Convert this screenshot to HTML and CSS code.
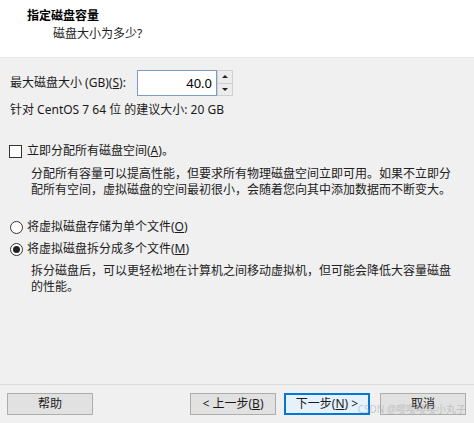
FILE: index.html
```html
<!DOCTYPE html>
<html lang="zh">
<head>
<meta charset="utf-8">
<title>指定磁盘容量</title>
<link rel="stylesheet" href="styles.css">
</head>
<body>
<div class="dialog">
  <header class="header">
    <div class="title">指定磁盘容量</div>
    <div class="subtitle">磁盘大小为多少?</div>
  </header>
  <main class="main">
    <div class="size-row">
      <span class="label">最大磁盘大小 (GB)(<u>S</u>):</span>
      <div class="spin">
        <div class="spin-input">40.0</div>
        <div class="spin-btns">
          <div class="spin-btn"><span class="tri-up"></span></div>
          <div class="spin-btn"><span class="tri-down"></span></div>
        </div>
      </div>
    </div>
    <div class="hint">针对 CentOS 7 64 位 的建议大小: 20 GB</div>
    <div class="opt opt-check">
      <span class="checkbox"></span>
      <span>立即分配所有磁盘空间(<u>A</u>)。</span>
    </div>
    <div class="desc desc-1">分配所有容量可以提高性能，但要求所有物理磁盘空间立即可用。如果不立即分<br>配所有空间，虚拟磁盘的空间最初很小，会随着您向其中添加数据而不断变大。</div>
    <div class="opt opt-r1">
      <span class="radio"></span>
      <span>将虚拟磁盘存储为单个文件(<u>O</u>)</span>
    </div>
    <div class="opt opt-r2">
      <span class="radio checked"><span class="dot"></span></span>
      <span>将虚拟磁盘拆分成多个文件(<u>M</u>)</span>
    </div>
    <div class="desc desc-2">拆分磁盘后，可以更轻松地在计算机之间移动虚拟机，但可能会降低大容量磁盘<br>的性能。</div>
  </main>
  <footer class="footer">
    <button class="btn">帮助</button>
    <div class="spacer"></div>
    <button class="btn">&lt; 上一步(<u>B</u>)</button>
    <button class="btn focus">下一步(<u>N</u>) &gt;</button>
    <button class="btn cancel">取消</button>
    <div class="watermark">CSDN @嘤嘤嘤嘤小丸子</div>
  </footer>
</div>
</body>
</html>
```

FILE: styles.css
```css
* { box-sizing: border-box; }
html, body { margin: 0; padding: 0; }
body {
  width: 474px;
  height: 423px;
  overflow: hidden;
  background: #f0f0f0;
  font-family: "Noto Sans", "Noto Sans CJK SC", sans-serif;
  font-size: 12px;
  color: #1a1a1a;
}
.dialog {
  display: flex;
  flex-direction: column;
  height: 423px;
}
.header {
  height: 58px;
  background: #fff;
  border-bottom: 1px solid #e6e6e6;
  padding-top: 8px;
}
.title {
  font-weight: bold;
  line-height: 16px;
  padding-left: 27px;
  color: #000;
}
.subtitle {
  line-height: 16px;
  padding-left: 53px;
  margin-top: 2px;
  color: #222;
}
.main {
  flex: 1;
  padding-left: 10px;
}
u { text-decoration: underline; text-underline-offset: 1px; }
.size-row {
  display: flex;
  align-items: center;
  height: 26px;
  margin-top: 12px;
}
.label { width: 127px; line-height: 16px; }
.spin {
  display: flex;
  height: 26px;
}
.spin-input {
  width: 80px;
  height: 26px;
  background: #fff;
  border: 1px solid #7a9cc6;
  text-align: right;
  padding-right: 4px;
  font-size: 13px;
  line-height: 24px;
  color: #000;
}
.spin-btns {
  display: flex;
  flex-direction: column;
  width: 16px;
  height: 26px;
}
.spin-btn {
  flex: 1;
  display: flex;
  align-items: center;
  justify-content: center;
  background: #ececec;
  border: 1px solid #d0d0d0;
}
.spin-btn + .spin-btn { border-top: none; }
.tri-up {
  width: 0; height: 0;
  border-left: 3px solid transparent;
  border-right: 3px solid transparent;
  border-bottom: 3px solid #222;
}
.tri-down {
  width: 0; height: 0;
  border-left: 3px solid transparent;
  border-right: 3px solid transparent;
  border-top: 3px solid #222;
}
.hint {
  line-height: 16px;
  margin-top: 6px;
}
.opt {
  display: flex;
  align-items: center;
  gap: 4px;
  line-height: 16px;
  height: 16px;
}
.opt-check { margin-top: 25px; margin-left: -1px; gap: 5px; }
.opt-r1 { margin-top: 21px; }
.opt-r2 { margin-top: 6px; }
.checkbox {
  width: 13px;
  height: 13px;
  border: 1px solid #333;
  background: #fff;
}
.radio {
  width: 13px;
  height: 13px;
  border: 1px solid #333;
  border-radius: 50%;
  background: #fff;
  display: flex;
  align-items: center;
  justify-content: center;
}
.dot {
  width: 7px;
  height: 7px;
  border-radius: 50%;
  background: #222;
}
.desc {
  padding-left: 21px;
  line-height: 16px;
  color: #222;
}
.desc-1 { margin-top: 7px; }
.desc-2 { margin-top: 6px; }
.footer {
  position: relative;
  display: flex;
  align-items: center;
  height: 39px;
  border-top: 1px solid #dcdcdc;
  padding: 0 8px 0 7px;
}
.spacer { flex: 1; }
.btn {
  width: 86px;
  height: 22px;
  background: #e1e1e1;
  border: 1px solid #adadad;
  font-family: inherit;
  font-size: 12px;
  color: #1a1a1a;
  padding: 0;
  line-height: 18px;
  margin-left: 8px;
}
.btn:first-child { margin-left: 0; }
.btn.focus {
  border: 2px solid #0078d7;
  background: #e5f1fb;
}
.btn.cancel { margin-left: 10px; }
.watermark {
  position: absolute;
  right: 8px;
  top: 18px;
  font-size: 10px;
  line-height: 12px;
  color: rgba(160, 160, 160, 0.5);
  pointer-events: none;
}
```
